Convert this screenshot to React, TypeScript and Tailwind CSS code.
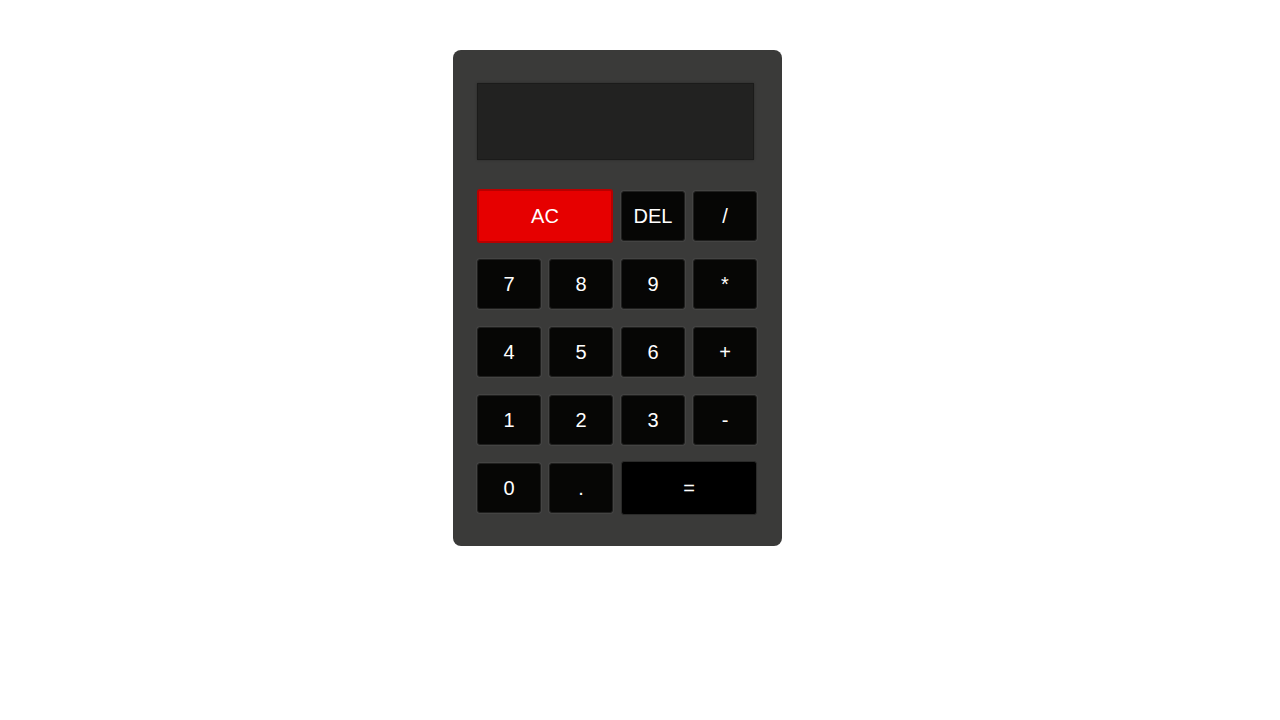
const rows: string[][] = [
  ['7', '8', '9', '*'],
  ['4', '5', '6', '+'],
  ['1', '2', '3', '-'],
]

function Key({ label, wide, className }: { label: string; wide?: boolean; className?: string }) {
  return (
    <button
      className={
        className ??
        `${wide ? 'w-[136px]' : 'w-16'} h-[50px] bg-[#060605] text-white text-[20px] rounded-[3px] border border-[#1f1f1e] shadow-[0_0_0_1px_#444443]`
      }
    >
      {label}
    </button>
  )
}

export default function App() {
  return (
    <div className="min-h-screen bg-white" style={{ fontFamily: '"Liberation Sans", Arial, sans-serif' }}>
      <div className="pt-[50px] pl-[453px]">
        <div className="w-[329px] h-[496px] bg-[#3a3a39] rounded-lg pt-[33px] pl-6">
          <div className="w-[277px] h-[77px] bg-[#222221] border border-[#1b1b1a] shadow-[0_0_2px_#2a2a29]" />
          <div className="flex flex-col gap-[14px] mt-[29px]">
            <div className="h-[54px] flex items-center gap-2">
              <button className="w-[136px] h-[54px] bg-[#e60000] text-white text-[20px] rounded-[3px] border-2 border-[#b80000]">
                AC
              </button>
              <Key label="DEL" />
              <Key label="/" />
            </div>
            {rows.map((r) => (
              <div key={r.join('')} className="h-[54px] flex items-center gap-2">
                {r.map((k) => (
                  <Key key={k} label={k} />
                ))}
              </div>
            ))}
            <div className="h-[54px] flex items-center gap-2">
              <Key label="0" />
              <Key label="." />
              <button className="w-[136px] h-[54px] bg-black text-white text-[20px] rounded-[3px] border border-[#2a2a29]">
                =
              </button>
            </div>
          </div>
        </div>
      </div>
    </div>
  )
}
